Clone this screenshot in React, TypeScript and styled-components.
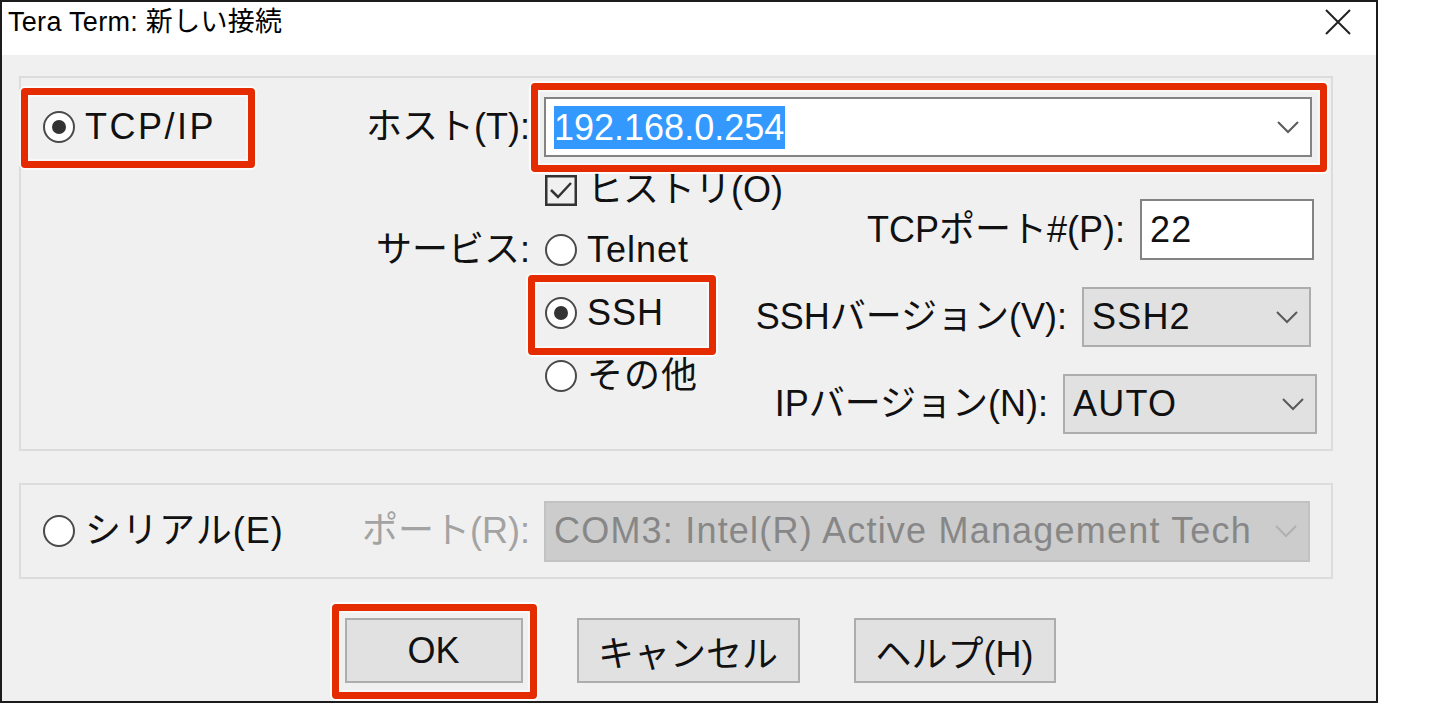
import React from "react";
import styled, { createGlobalStyle } from "styled-components";

const GlobalStyle = createGlobalStyle`
  html, body {
    margin: 0;
    padding: 0;
    background: #ffffff;
  }
  body {
    font-family: "Liberation Sans", "Noto Sans CJK JP", sans-serif;
    color: #111111;
  }
`;

const Page = styled.div`
  width: 1441px;
  height: 709px;
  background: #ffffff;
`;

const Dialog = styled.div`
  width: 1378px;
  height: 703px;
  box-sizing: border-box;
  border: 2px solid #1c1c1c;
  display: flex;
  flex-direction: column;
  background: #f0f0f0;
`;

const TitleBar = styled.div`
  height: 53px;
  flex: none;
  box-sizing: border-box;
  padding: 7px 25px 0 6px;
  background: #ffffff;
  display: flex;
  align-items: flex-start;
  justify-content: space-between;
`;

const Title = styled.span`
  font-size: 27px;
  line-height: 27px;
  letter-spacing: 0.3px;
  color: #000000;
`;

const Body = styled.div`
  flex: 1;
  padding: 21px 43px 0 17px;
  display: flex;
  flex-direction: column;
`;

const GroupBox = styled.div<{ $h: number; $gapTop?: number }>`
  height: ${(p) => p.$h}px;
  margin-top: ${(p) => p.$gapTop ?? 0}px;
  box-sizing: border-box;
  border: 2px solid #dcdcdc;
  display: flex;
  align-items: ${(p) => (p.$gapTop ? "center" : "flex-start")};
`;

const LeftCol = styled.div<{ $top?: number }>`
  width: 329px;
  flex: none;
  box-sizing: border-box;
  padding: ${(p) => p.$top ?? 0}px 0 0 22px;
`;

const RightCol = styled.div`
  flex: 1;
  display: flex;
  flex-direction: column;
  padding: 19px 17px 0 0;
`;

const Text = styled.span<{ $disabled?: boolean; $spacing?: number }>`
  font-size: 36px;
  line-height: 36px;
  white-space: nowrap;
  letter-spacing: ${(p) => p.$spacing ?? 0}px;
  color: ${(p) => (p.$disabled ? "#a3a3a3" : "#111111")};
`;

const OptionRow = styled.div<{ $h?: number }>`
  display: flex;
  align-items: center;
  gap: 10px;
  height: ${(p) => p.$h ?? 32}px;
`;

const RadioCircle = styled.span<{ $checked?: boolean }>`
  width: 32px;
  height: 32px;
  flex: none;
  box-sizing: border-box;
  border-radius: 50%;
  border: 2.5px solid #4a4a4a;
  background: #ffffff;
  display: flex;
  align-items: center;
  justify-content: center;
  &::after {
    content: "";
    width: 14px;
    height: 14px;
    border-radius: 50%;
    background: ${(p) => (p.$checked ? "#333333" : "transparent")};
  }
`;

const FieldRow = styled.div<{ $h: number }>`
  display: flex;
  align-items: center;
  height: ${(p) => p.$h}px;
`;

const FieldLabel = styled(Text)`
  width: 180px;
  flex: none;
  text-align: right;
  margin-right: 14px;
`;

const ComboBox = styled.div<{ $w: number; $h?: number; $variant: "edit" | "list" | "disabled" }>`
  width: ${(p) => p.$w}px;
  height: ${(p) => p.$h ?? 60}px;
  flex: none;
  box-sizing: border-box;
  padding: 0 10px 0 8px;
  display: flex;
  align-items: center;
  justify-content: space-between;
  border: 2px solid
    ${(p) => (p.$variant === "edit" ? "#838383" : p.$variant === "list" ? "#adadad" : "#c2c2c2")};
  background: ${(p) => (p.$variant === "edit" ? "#ffffff" : p.$variant === "list" ? "#e1e1e1" : "#cccccc")};
`;

const ComboText = styled(Text)<{ $dim?: boolean }>`
  color: ${(p) => (p.$dim ? "#878787" : "#111111")};
  letter-spacing: 1.2px;
`;

const Selected = styled.span`
  display: inline-block;
  font-size: 36px;
  line-height: 43px;
  padding-right: 1px;
  background: #3399ff;
  color: #ffffff;
`;

const Lower = styled.div`
  display: flex;
  align-items: flex-start;
  margin-top: 15px;
`;

const ServiceGrid = styled.div`
  display: grid;
  grid-template-columns: 180px 190px;
  grid-template-rows: 46px 63px 63px 63px;
  column-gap: 14px;
  flex: none;
`;

const CheckRow = styled.div`
  grid-column: 2;
  grid-row: 1;
  align-self: start;
  height: 36px;
  display: flex;
  align-items: center;
  gap: 10px;
  padding-left: 1px;
`;

const CheckSvg = styled.svg`
  flex: none;
  display: block;
`;

const ServiceLabel = styled(Text)`
  grid-column: 1;
  grid-row: 2;
  align-self: center;
  text-align: right;
`;

const OptionCell = styled.div<{ $row: number }>`
  grid-column: 2;
  grid-row: ${(p) => p.$row};
  display: flex;
  align-items: center;
  padding-left: 1px;
`;

const PortCol = styled.div`
  flex: 1;
  display: flex;
  flex-direction: column;
  align-items: flex-end;
  gap: 27px;
  margin-top: 27px;
`;

const PortRow = styled.div<{ $shift?: number }>`
  display: flex;
  align-items: center;
  gap: 15px;
  margin-right: ${(p) => p.$shift ?? 0}px;
`;

const ButtonRow = styled.div`
  display: flex;
  justify-content: center;
  gap: 54px;
  margin-top: 39px;
  padding-left: 48px;
`;

const Button = styled.div<{ $w: number }>`
  width: ${(p) => p.$w}px;
  height: 65px;
  box-sizing: border-box;
  border: 2px solid #adadad;
  background: #e1e1e1;
  display: flex;
  align-items: center;
  justify-content: center;
  font-size: 36px;
  color: #111111;
  white-space: nowrap;
`;

const Highlight = styled.div<{ $top: number; $left: number; $w: number; $h: number }>`
  position: relative;
  &::after {
    content: "";
    position: absolute;
    top: ${(p) => p.$top}px;
    left: ${(p) => p.$left}px;
    width: ${(p) => p.$w}px;
    height: ${(p) => p.$h}px;
    box-sizing: border-box;
    border: 7px solid #e52b00;
    border-radius: 4px;
    box-shadow: 0 0 0 2px rgba(255, 255, 255, 0.7), inset 0 0 0 2px rgba(255, 255, 255, 0.55);
    pointer-events: none;
    z-index: 2;
  }
`;

const CloseIcon = () => (
  <svg width="26" height="26" viewBox="0 0 26 26">
    <path d="M1 1 L25 25 M25 1 L1 25" stroke="#222222" strokeWidth="2" fill="none" />
  </svg>
);

const Chevron = ({ color = "#5a5a5a" }: { color?: string }) => (
  <svg width="24" height="14" viewBox="0 0 24 14">
    <path d="M2 2 L12 12 L22 2" stroke={color} strokeWidth="2" fill="none" />
  </svg>
);

const CheckBox = () => (
  <CheckSvg width="32" height="31" viewBox="0 0 32 31">
    <rect x="1.25" y="1.25" width="29.5" height="28.5" fill="none" stroke="#333333" strokeWidth="2.5" />
    <path d="M6 15 L13 22 L26 8" fill="none" stroke="#333333" strokeWidth="2.5" />
  </CheckSvg>
);

const Radio = ({ label, checked }: { label: string; checked?: boolean }) => (
  <OptionRow>
    <RadioCircle $checked={checked} />
    <Text $spacing={1}>{label}</Text>
  </OptionRow>
);

export default function App() {
  return (
    <Page>
      <GlobalStyle />
      <Dialog>
        <TitleBar>
          <Title>Tera Term: 新しい接続</Title>
          <CloseIcon />
        </TitleBar>
        <Body>
          <GroupBox $h={375}>
            <LeftCol $top={19}>
              <Highlight $top={-9} $left={-22} $w={234} $h={80}>
                <OptionRow $h={60}>
                  <RadioCircle $checked />
                  <Text $spacing={2.5}>TCP/IP</Text>
                </OptionRow>
              </Highlight>
            </LeftCol>
            <RightCol>
              <FieldRow $h={60}>
                <FieldLabel>ホスト(T):</FieldLabel>
                <Highlight $top={-14} $left={-13} $w={796} $h={89}>
                  <ComboBox $w={768} $variant="edit">
                    <Selected>192.168.0.254</Selected>
                    <Chevron />
                  </ComboBox>
                </Highlight>
              </FieldRow>
              <Lower>
                <ServiceGrid>
                  <CheckRow>
                    <CheckBox />
                    <Text>ヒストリ(O)</Text>
                  </CheckRow>
                  <ServiceLabel>サービス:</ServiceLabel>
                  <OptionCell $row={2}>
                    <Radio label="Telnet" />
                  </OptionCell>
                  <OptionCell $row={3}>
                    <Highlight $top={-22} $left={-17} $w={188} $h={80}>
                      <Radio label="SSH" checked />
                    </Highlight>
                  </OptionCell>
                  <OptionCell $row={4}>
                    <Radio label="その他" />
                  </OptionCell>
                </ServiceGrid>
                <PortCol>
                  <PortRow>
                    <Text>TCPポート#(P):</Text>
                    <ComboBox $w={174} $h={61} $variant="edit">
                      <ComboText>22</ComboText>
                    </ComboBox>
                  </PortRow>
                  <PortRow $shift={3}>
                    <Text>SSHバージョン(V):</Text>
                    <ComboBox $w={229} $variant="list">
                      <ComboText>SSH2</ComboText>
                      <Chevron />
                    </ComboBox>
                  </PortRow>
                  <PortRow $shift={-3}>
                    <Text>IPバージョン(N):</Text>
                    <ComboBox $w={254} $variant="list">
                      <ComboText>AUTO</ComboText>
                      <Chevron />
                    </ComboBox>
                  </PortRow>
                </PortCol>
              </Lower>
            </RightCol>
          </GroupBox>

          <GroupBox $h={96} $gapTop={32}>
            <LeftCol>
              <Radio label="シリアル(E)" />
            </LeftCol>
            <FieldLabel $disabled>ポート(R):</FieldLabel>
            <ComboBox $w={766} $h={61} $variant="disabled">
              <ComboText $dim>COM3: Intel(R) Active Management Tech</ComboText>
              <Chevron color="#b0b0b0" />
            </ComboBox>
          </GroupBox>

          <ButtonRow>
            <Highlight $top={-14} $left={-13} $w={205} $h={95}>
              <Button $w={178}>OK</Button>
            </Highlight>
            <Button $w={223}>キャンセル</Button>
            <Button $w={202}>ヘルプ(H)</Button>
          </ButtonRow>
        </Body>
      </Dialog>
    </Page>
  );
}
